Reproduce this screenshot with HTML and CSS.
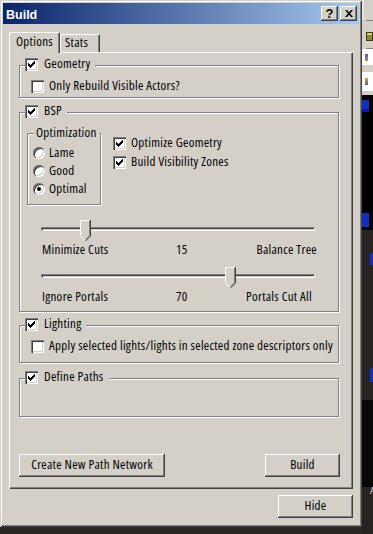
FILE: index.html
```html
<!DOCTYPE html>
<html>
<head>
<meta charset="utf-8">
<title>Build</title>
<link rel="stylesheet" href="styles.css">
</head>
<body>
<div class="screen">
  <div class="window">
    <div class="titlebar">
      <span class="title">Build</span>
      <div class="caption-buttons">
        <button class="cap-btn">?</button>
        <button class="cap-btn"><svg width="8" height="7" viewBox="0 0 8 7"><path d="M0 0h2l2 2.2L6 0h2L5 3.5 8 7H6L4 4.8 2 7H0l3-3.5z"/></svg></button>
      </div>
    </div>
    <div class="dialog">
      <div class="tabs">
        <div class="tab active">Options</div>
        <div class="tab">Stats</div>
      </div>
      <div class="panel">
        <fieldset class="group geometry">
          <legend><span class="cb"><svg class="tick" width="7" height="7" viewBox="0 0 7 7"><path d="M0 2h1v3H0zM1 3h1v3H1zM2 4h1v3H2zM3 3h1v3H3zM4 2h1v3H4zM5 1h1v3H5zM6 0h1v3H6z"/></svg></span><span>Geometry</span></legend>
          <div class="group-body geometry-body">
            <div class="row"><span class="cb"></span><span>Only Rebuild Visible Actors?</span></div>
          </div>
        </fieldset>

        <fieldset class="group bsp">
          <legend><span class="cb"><svg class="tick" width="7" height="7" viewBox="0 0 7 7"><path d="M0 2h1v3H0zM1 3h1v3H1zM2 4h1v3H2zM3 3h1v3H3zM4 2h1v3H4zM5 1h1v3H5zM6 0h1v3H6z"/></svg></span><span>BSP</span></legend>
          <div class="group-body bsp-body">
            <div class="bsp-top">
              <fieldset class="group optim">
                <legend class="plain">Optimization</legend>
                <div class="group-body optim-body">
                  <div class="row"><span class="radio"></span><span>Lame</span></div>
                  <div class="row"><span class="radio"></span><span>Good</span></div>
                  <div class="row"><span class="radio on"></span><span>Optimal</span></div>
                </div>
              </fieldset>
              <div class="bsp-options">
                <div class="row"><span class="cb"><svg class="tick" width="7" height="7" viewBox="0 0 7 7"><path d="M0 2h1v3H0zM1 3h1v3H1zM2 4h1v3H2zM3 3h1v3H3zM4 2h1v3H4zM5 1h1v3H5zM6 0h1v3H6z"/></svg></span><span>Optimize Geometry</span></div>
                <div class="row"><span class="cb"><svg class="tick" width="7" height="7" viewBox="0 0 7 7"><path d="M0 2h1v3H0zM1 3h1v3H1zM2 4h1v3H2zM3 3h1v3H3zM4 2h1v3H4zM5 1h1v3H5zM6 0h1v3H6z"/></svg></span><span>Build Visibility Zones</span></div>
              </div>
            </div>

            <div class="slider first">
              <div class="track"></div>
              <svg class="thumb" style="left: 39px" width="11" height="21" viewBox="0 0 11 21"><polygon points="0,0 11,0 11,16 5.5,21 0,16" fill="#d4d0c8"/><path d="M0.5 16V0.5H10" stroke="#fff" fill="none"/><path d="M0.5 16L5.3 20.6" stroke="#fff" fill="none"/><path d="M10.5 0V16L5.5 21" stroke="#404040" fill="none"/><path d="M9.5 1V15.6L5.5 19.5" stroke="#808080" fill="none"/></svg>
            </div>
            <div class="slider-labels"><span>Minimize Cuts</span><span>15</span><span class="end">Balance Tree</span></div>

            <div class="slider second">
              <div class="track"></div>
              <svg class="thumb" style="left: 184px" width="11" height="21" viewBox="0 0 11 21"><polygon points="0,0 11,0 11,16 5.5,21 0,16" fill="#d4d0c8"/><path d="M0.5 16V0.5H10" stroke="#fff" fill="none"/><path d="M0.5 16L5.3 20.6" stroke="#fff" fill="none"/><path d="M10.5 0V16L5.5 21" stroke="#404040" fill="none"/><path d="M9.5 1V15.6L5.5 19.5" stroke="#808080" fill="none"/></svg>
            </div>
            <div class="slider-labels second-labels"><span>Ignore Portals</span><span>70</span><span class="end">Portals Cut All</span></div>
          </div>
        </fieldset>

        <fieldset class="group lighting">
          <legend><span class="cb"><svg class="tick" width="7" height="7" viewBox="0 0 7 7"><path d="M0 2h1v3H0zM1 3h1v3H1zM2 4h1v3H2zM3 3h1v3H3zM4 2h1v3H4zM5 1h1v3H5zM6 0h1v3H6z"/></svg></span><span>Lighting</span></legend>
          <div class="group-body lighting-body">
            <div class="row"><span class="cb"></span><span>Apply selected lights/lights in selected zone descriptors only</span></div>
          </div>
        </fieldset>

        <fieldset class="group paths">
          <legend><span class="cb"><svg class="tick" width="7" height="7" viewBox="0 0 7 7"><path d="M0 2h1v3H0zM1 3h1v3H1zM2 4h1v3H2zM3 3h1v3H3zM4 2h1v3H4zM5 1h1v3H5zM6 0h1v3H6z"/></svg></span><span>Define Paths</span></legend>
          <div class="group-body paths-body"></div>
        </fieldset>

        <div class="panel-buttons">
          <button class="btn create">Create New Path Network</button>
          <button class="btn build">Build</button>
        </div>
      </div>
      <div class="footer">
        <button class="btn hide">Hide</button>
      </div>
    </div>
  </div>

  <div class="strip">
    <div class="strip-tool">
      <div class="st-top"></div>
      <div class="st-line"></div>
      <div class="st-gap a"></div>
      <div class="st-icon olive"></div>
      <div class="st-gap b"></div>
      <div class="st-line"></div>
      <div class="st-white w1"><span class="st-dot orange"></span></div>
      <div class="st-gap c"></div>
      <div class="st-white w2"><span class="st-dot orange2"></span></div>
      <div class="st-gap d"></div>
    </div>
    <div class="strip-black">
      <div class="blue b1"></div>
      <div class="blue b2"></div>
    </div>
    <div class="strip-dark">
      <div class="blue b3"></div>
      <div class="blue b4"></div>
      <div class="dark-black"></div>
      <div class="tiny">A</div>
    </div>
  </div>
</div>
</body>
</html>
```

FILE: styles.css
```css
* { box-sizing: border-box; }
html, body { margin: 0; padding: 0; }
body {
  width: 373px;
  height: 534px;
  overflow: hidden;
  background: #282522;
  font-family: "Open Sans", "Liberation Sans", Arial, sans-serif;
  font-stretch: 75%;
  font-size: 13px;
  letter-spacing: 0.28px;
  color: #000;
}
.screen { display: flex; align-items: flex-start; }

/* window frame */
.window {
  flex: none;
  width: 362px;
  height: 527px;
  padding: 3px;
  background: #d4d0c8;
  box-shadow: inset 1px 1px #d4d0c8, inset -1px -1px #404040, inset 2px 2px #fff, inset -2px -2px #808080;
  display: flex;
  flex-direction: column;
}
.titlebar {
  flex: none;
  height: 21px;
  display: flex;
  align-items: center;
  padding: 0 2px 0 3px;
  background: linear-gradient(to right, #0a246a, #a6caf0);
}
.title {
  flex: 1;
  padding-top: 3px;
  color: #fff;
  font-family: "Liberation Sans", Arial, sans-serif;
  font-stretch: normal;
  letter-spacing: 0;
  font-weight: bold;
  font-size: 12.5px;
}
.caption-buttons { display: flex; gap: 2px; }
.cap-btn {
  width: 17px;
  height: 15px;
  padding: 0;
  border: 0;
  background: #d4d0c8;
  box-shadow: inset -1px -1px #404040, inset 1px 1px #fff, inset -2px -2px #808080;
  display: flex;
  align-items: center;
  justify-content: center;
  font-family: "Liberation Sans", Arial, sans-serif;
  font-stretch: normal;
  font-weight: bold;
  font-size: 13px;
  line-height: 13px;
  color: #000;
}

.dialog {
  flex: 1;
  display: flex;
  flex-direction: column;
  padding: 8px 6px 6px 6px;
}

/* tabs */
.tabs {
  flex: none;
  height: 20px;
  display: flex;
  align-items: flex-end;
  position: relative;
  z-index: 1;
}
.tab {
  height: 18px;
  width: 40px;
  padding: 0 0 0 4px;
  line-height: 15px;
  background: #d4d0c8;
  border-left: 1px solid #fff;
  border-top: 1px solid #fff;
  border-right: 1px solid #404040;
  border-radius: 2px 2px 0 0;
  box-shadow: inset -1px 0 #808080;
}
.tab.active {
  width: 51px;
  height: 21px;
  margin-bottom: -1px;
  padding: 1px 0 0 6px;
}

.panel {
  flex: none;
  height: 437px;
  background: #d4d0c8;
  box-shadow: inset 1px 1px #fff, inset -1px -1px #404040, inset -2px -2px #808080;
  padding: 6px 0 0 10px;
  display: flex;
  flex-direction: column;
  align-items: flex-start;
}

/* group boxes */
.group {
  margin: 0;
  padding: 0;
  min-width: 0;
  width: 320px;
  border: 1px solid #808080;
  box-shadow: inset 1px 1px #fff, 1px 1px #fff;
}
.group legend {
  margin-left: 5px;
  padding: 0 5px 0 0;
  height: 14px;
  line-height: 11px;
  display: flex;
  align-items: flex-start;
  background: #d4d0c8;
  white-space: nowrap;
}
.group legend .cb { margin-right: 6px; }
.group legend.plain { margin-left: 6px; padding: 0 2px; line-height: 13px; }

.geometry { margin-bottom: 7px; }
.bsp { margin-bottom: 6px; }
.lighting { margin-bottom: 8px; }

.geometry-body { padding: 8px 0 4px 11px; }
.bsp-body { padding: 7px 0 7px 7px; }
.lighting-body { padding: 8px 0 9px 11px; }
.paths-body { height: 31px; }

.row {
  display: flex;
  align-items: flex-start;
  height: 13px;
  line-height: 10px;
  white-space: nowrap;
}
.row .cb { margin-right: 5px; }

.cb {
  flex: none;
  width: 13px;
  height: 13px;
  background: #fff;
  box-shadow: inset 1px 1px #808080, inset 2px 2px #404040, inset -1px -1px #fff, inset -2px -2px #d4d0c8;
  display: flex;
  align-items: center;
  justify-content: center;
}
.tick { display: block; fill: #000; shape-rendering: crispEdges; }

.radio {
  flex: none;
  position: relative;
  width: 12px;
  height: 12px;
  margin-right: 4px;
  border-radius: 50%;
  background: #fff;
  box-shadow: inset 1px 1px #808080, inset 2px 2px #404040, inset -1px -1px #fff, inset -2px -2px #d4d0c8;
}
.radio.on::after {
  content: "";
  position: absolute;
  left: 4px;
  top: 4px;
  width: 4px;
  height: 4px;
  border-radius: 50%;
  background: #000;
}

/* BSP contents */
.bsp-top { display: flex; align-items: flex-start; }
.optim { width: 74px; }
.optim-body {
  padding: 7px 0 8px 5px;
  display: flex;
  flex-direction: column;
  gap: 5px;
}
.bsp-options {
  margin-left: 12px;
  padding-top: 11px;
  display: flex;
  flex-direction: column;
  gap: 6px;
}

.slider {
  position: relative;
  width: 274px;
  height: 22px;
  margin-left: 14px;
  padding-top: 8px;
}
.slider.first { margin-top: 14px; }
.slider.second { margin-top: 9px; }
.track {
  height: 4px;
  border: 1px solid;
  border-color: #808080 #fff #fff #808080;
  box-shadow: inset 1px 1px #404040, inset -1px -1px #d4d0c8;
}
.thumb { position: absolute; top: 1px; display: block; }

.slider-labels {
  display: grid;
  grid-template-columns: 134px auto 1fr;
  width: 275px;
  height: 16px;
  line-height: 16px;
  margin-left: 15px;
  white-space: nowrap;
}
.slider-labels .end { text-align: right; }
.second-labels .end { padding-right: 5px; }

/* buttons */
.btn {
  height: 23px;
  padding: 0 0 3px 0;
  border: 0;
  background: #d4d0c8;
  box-shadow: inset -1px -1px #404040, inset 1px 1px #fff, inset -2px -2px #808080;
  font: inherit;
  letter-spacing: inherit;
  color: #000;
  white-space: nowrap;
}
.panel-buttons {
  width: 321px;
  margin-top: 37px;
  display: flex;
  justify-content: space-between;
}
.btn.create { width: 146px; }
.btn.build { width: 75px; }
.btn.hide { width: 75px; }
.footer {
  flex: none;
  margin-top: 6px;
  display: flex;
  justify-content: flex-end;
}

/* background strip at the right */
.strip {
  flex: none;
  width: 11px;
  height: 534px;
  display: flex;
  flex-direction: column;
  background: #262320;
}
.strip-tool {
  height: 95px;
  background: #d4d0c8;
  display: flex;
  flex-direction: column;
}
.st-top { height: 20px; border-left: 2px solid #e8e6e2; }
.st-line { height: 1px; background: #808080; margin-left: 4px; }
.st-gap.a { height: 11px; }
.st-icon.olive { height: 9px; width: 7px; margin-left: 4px; background: #8e8630; border: 1px solid #3c3a20; box-shadow: inset 0 2px #d8d060; }
.st-gap.b { height: 7px; }
.st-white { background: #fff; display: flex; align-items: center; }
.st-white.w1 { height: 16px; }
.st-white.w2 { height: 19px; }
.st-gap.c { height: 7px; }
.st-gap.d { height: 4px; }
.st-dot { width: 3px; height: 7px; margin-left: 3px; }
.st-dot.orange { background: linear-gradient(#3a60c0, #e08a30); }
.st-dot.orange2 { background: linear-gradient(#d8a040, #4a6ab0); }

.strip-black {
  height: 135px;
  background: #000;
  display: flex;
  flex-direction: column;
}
.blue { background: #1030c0; }
.blue.b1 { height: 12px; width: 7px; margin-top: 5px; box-shadow: inset 0 -3px #0818a0; }
.blue.b2 { height: 14px; width: 7px; margin-top: 101px; }
.strip-dark {
  flex: 1;
  display: flex;
  flex-direction: column;
  align-items: flex-end;
}
.blue.b3 { height: 12px; width: 3px; margin-top: 23px; }
.blue.b4 { height: 14px; width: 3px; margin-top: 103px; }
.dark-black { height: 87px; width: 11px; margin-top: 18px; background: #080808; }
.tiny { color: #ddd; font-family: "DejaVu Sans", sans-serif; font-stretch: normal; letter-spacing: 0; font-size: 8px; line-height: 9px; width: 11px; padding-left: 8px; }
```
